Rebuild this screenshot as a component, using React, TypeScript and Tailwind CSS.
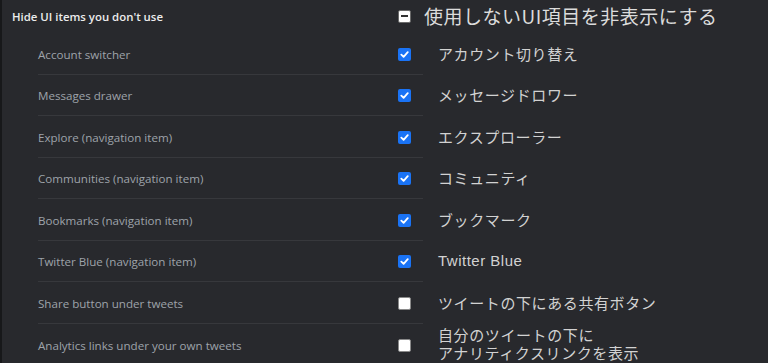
import React from 'react';

type Item = { label: string; ja: string[]; checked: boolean };

const items: Item[] = [
  { label: 'Account switcher', ja: ['アカウント切り替え'], checked: true },
  { label: 'Messages drawer', ja: ['メッセージドロワー'], checked: true },
  { label: 'Explore (navigation item)', ja: ['エクスプローラー'], checked: true },
  { label: 'Communities (navigation item)', ja: ['コミュニティ'], checked: true },
  { label: 'Bookmarks (navigation item)', ja: ['ブックマーク'], checked: true },
  { label: 'Twitter Blue (navigation item)', ja: ['Twitter Blue'], checked: true },
  { label: 'Share button under tweets', ja: ['ツイートの下にある共有ボタン'], checked: false },
  { label: 'Analytics links under your own tweets', ja: ['自分のツイートの下に', 'アナリティクスリンクを表示'], checked: false },
];

const Check: React.FC<{ checked: boolean }> = ({ checked }) =>
  checked ? (
    <span className="flex h-[13px] w-[13px] items-center justify-center rounded-[2px] bg-[#1a73f5]">
      <svg width="9" height="9" viewBox="0 0 10 10" fill="none">
        <path d="M1.5 5.2 L4 7.6 L8.6 2.4" stroke="white" strokeWidth="2" strokeLinecap="round" strokeLinejoin="round" />
      </svg>
    </span>
  ) : (
    <span className="block h-[13px] w-[13px] rounded-[2px] border border-[#8a8a8a] bg-white" />
  );

const App: React.FC = () => {
  return (
    <div className="h-[363px] w-[768px] overflow-hidden border-l-2 border-[#17181a] bg-[#28292d] font-['Open_Sans','Noto_Sans_CJK_JP',sans-serif]">
      <div className="flex h-[33px] items-center">
        <div className="flex w-[421px] items-center justify-between pl-[10px] pr-[12px]">
          <span className="text-[11.4px] font-semibold text-[#ececec]">Hide UI items you don't use</span>
          <span className="flex h-[13px] w-[13px] items-center justify-center rounded-[2px] border border-[#6a6a6a] bg-white">
            <span className="block h-[2px] w-[7px] bg-[#333]" />
          </span>
        </div>
        <span className="ml-[1px] font-['Noto_Sans_CJK_JP',sans-serif] text-[19px] tracking-[0.5px] text-[#dcdcdc]">
          使用しないUI項目を非表示にする
        </span>
      </div>
      {items.map((it, i) => (
        <div key={i} className="flex h-[41.5px] items-center">
          <div
            className={`ml-[36px] flex h-full w-[385px] items-center justify-between pr-[12px] pt-[2px] ${
              i < items.length - 1 ? 'border-b border-[#37383c]' : ''
            }`}
          >
            <span className="text-[11.6px] text-[#9ea3aa]">{it.label}</span>
            <Check checked={it.checked} />
          </div>
          <p
            className={`ml-[15px] text-[15px] leading-[18px] text-[#d2d2d2] ${
              it.ja[0] === 'Twitter Blue'
                ? "font-['Liberation_Sans',sans-serif] tracking-[0.5px]"
                : "font-['Noto_Sans_CJK_JP',sans-serif] tracking-[0.6px]"
            }`}
          >
            {it.ja.map((l, j) => (
              <React.Fragment key={j}>
                {j > 0 && <br />}
                {l}
              </React.Fragment>
            ))}
          </p>
        </div>
      ))}
    </div>
  );
};

export default App;
